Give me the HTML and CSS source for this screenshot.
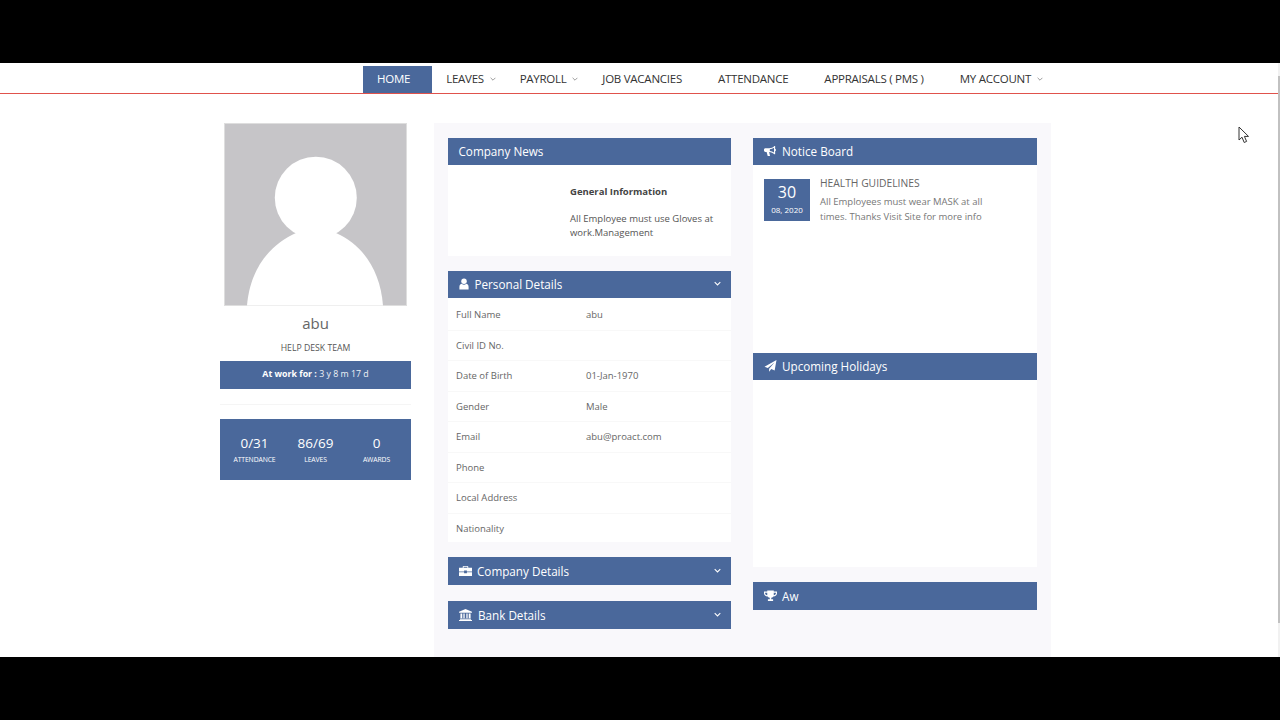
FILE: index.html
```html
<!DOCTYPE html>
<html lang="en">
<head>
    <meta charset="UTF-8">
    <meta name="viewport" content="width=device-width, initial-scale=1.0">
    <title>Employee Dashboard</title>
    <link rel="stylesheet" href="styles.css">
</head>
<body>
    <div class="letterbox"></div>
    <div class="screen">
        <div class="page">
            <nav class="topnav">
                <a class="nav-home">HOME</a>
                <a>LEAVES <svg class="nav-caret" viewBox="0 0 10 6"><path d="M1 1l4 4 4-4"/></svg></a>
                <a>PAYROLL <svg class="nav-caret" viewBox="0 0 10 6"><path d="M1 1l4 4 4-4"/></svg></a>
                <a>JOB VACANCIES</a>
                <a>ATTENDANCE</a>
                <a>APPRAISALS ( PMS )</a>
                <a>MY ACCOUNT <svg class="nav-caret" viewBox="0 0 10 6"><path d="M1 1l4 4 4-4"/></svg></a>
            </nav>

            <main class="content">
                <!-- profile column -->
                <aside class="profile">
                    <svg class="avatar" viewBox="0 0 183 183">
                        <rect x="0.500" y="0.500" width="182" height="182" fill="#c6c5c8" stroke="#dedede"/>
                        <circle cx="91.800" cy="74.700" r="41" fill="#fff"/>
                        <path d="M23 182.500C26 145 47 121 72 110H112C137 121 156 145 159 182.500Z" fill="#fff"/>
                    </svg>
                    <h2 class="profile-name">abu</h2>
                    <p class="profile-team">HELP DESK TEAM</p>
                    <div class="work-bar"><b>At work for :</b> 3 y 8 m 17 d</div>
                    <hr class="profile-line">
                    <div class="stats">
                        <div class="stat"><strong>0/31</strong><span>ATTENDANCE</span></div>
                        <div class="stat"><strong>86/69</strong><span>LEAVES</span></div>
                        <div class="stat"><strong>0</strong><span>AWARDS</span></div>
                    </div>
                </aside>

                <div class="board">
                    <div class="col">
                        <section class="panel">
                            <div class="panel-head"><span>Company News</span></div>
                            <div class="news-body">
                                <h4>General Information</h4>
                                <p>All Employee must use Gloves at work.Management</p>
                            </div>
                        </section>

                        <section class="panel">
                            <div class="panel-head">
                                <svg class="icon" viewBox="0 0 12 14"><circle cx="6" cy="3.800" r="3.300"/><path d="M0.500 13.500V10.500C0.500 8.300 1.800 7 3.300 6.800 4 7.500 5 7.900 6 7.900S8 7.500 8.700 6.800C10.200 7 11.500 8.300 11.500 10.500V13.500Z"/></svg>
                                <span>Personal Details</span>
                                <svg class="chev" viewBox="0 0 10 6"><path d="M1 1l4 4 4-4"/></svg>
                            </div>
                            <div class="details">
                                <div class="row"><span>Full Name</span><span>abu</span></div>
                                <div class="row"><span>Civil ID No.</span><span></span></div>
                                <div class="row"><span>Date of Birth</span><span>01-Jan-1970</span></div>
                                <div class="row"><span>Gender</span><span>Male</span></div>
                                <div class="row"><span>Email</span><span>abu@proact.com</span></div>
                                <div class="row"><span>Phone</span><span></span></div>
                                <div class="row"><span>Local Address</span><span></span></div>
                                <div class="row"><span>Nationality</span><span></span></div>
                            </div>
                        </section>

                        <section class="panel">
                            <div class="panel-head head-tall">
                                <svg class="icon icon-wide" viewBox="0 0 14 12"><path d="M5 0.500H9C9.600 0.500 10 0.900 10 1.500V2.500H14V6.500H8.500V5.500H5.500V6.500H0V2.500H4V1.500C4 0.900 4.400 0.500 5 0.500ZM5 2.500H9V1.500H5ZM0 7.300H5.500V8.500H8.500V7.300H14V11.500H0Z"/></svg>
                                <span>Company Details</span>
                                <svg class="chev" viewBox="0 0 10 6"><path d="M1 1l4 4 4-4"/></svg>
                            </div>
                        </section>

                        <section class="panel panel-bank">
                            <div class="panel-head head-tall">
                                <svg class="icon icon-wide" viewBox="0 0 14 13"><path d="M7 0L14 3V4H0V3ZM1.500 4.800H3.500V10H1.500ZM4.700 4.800H6.100V10H4.700ZM7.900 4.800H9.300V10H7.900ZM10.500 4.800H12.500V10H10.500ZM1 10.600H13V11.600H1ZM0 12H14V13H0Z"/></svg>
                                <span class="bank-title">Bank Details</span>
                                <svg class="chev" viewBox="0 0 10 6"><path d="M1 1l4 4 4-4"/></svg>
                            </div>
                        </section>
                    </div>

                    <div class="col col-right">
                        <section class="panel">
                            <div class="panel-head">
                                <svg class="icon icon-wide" viewBox="0 0 14 12"><path d="M12 0.500V3.600C13.200 3.900 13.200 6 12 6.300V9.500H11.200C9.800 8 7.800 7.200 5.500 7L6.500 11.500H4L2.800 7H1.500C0.700 7 0 6.300 0 5.500V4.500C0 3.700 0.700 3 1.500 3H5.500C7.800 2.900 9.800 2 11.200 0.500ZM10.800 2.400C9.500 3.300 7.900 3.900 6.300 4V6C7.900 6.200 9.500 6.700 10.800 7.600Z"/></svg>
                                <span>Notice Board</span>
                            </div>
                            <div class="notice-body">
                                <div class="date-box"><b>30</b><span>08, 2020</span></div>
                                <div class="notice-text">
                                    <h5>HEALTH GUIDELINES</h5>
                                    <p>All Employees must wear MASK at all times. Thanks Visit Site for more info</p>
                                </div>
                            </div>
                        </section>

                        <section class="panel">
                            <div class="panel-head">
                                <svg class="icon icon-wide" viewBox="0 0 13 13"><path d="M13 0L11 11.500 7.300 9.800 5 12.800V9.500L10.800 2.600 3.600 8.700 0 7.200Z"/></svg>
                                <span>Upcoming Holidays</span>
                            </div>
                            <div class="holiday-body"></div>
                        </section>

                        <section class="panel panel-award">
                            <div class="panel-head head-tall">
                                <svg class="icon icon-wide" viewBox="0 0 14 12"><path d="M3.500 0H10.500V1.200H14V3C14 5 12.400 6.300 10 6.500 9.400 7.300 8.600 7.800 7.800 8V9.600H9.800V11.500H4.200V9.600H6.200V8C5.400 7.800 4.600 7.300 4 6.500 1.600 6.300 0 5 0 3V1.200H3.500ZM1.200 2.400V3C1.200 4.100 2 5 3.500 5.200 3.500 4.400 3.500 3.400 3.500 2.400ZM12.800 2.400H10.500C10.500 3.400 10.500 4.400 10.500 5.200 12 5 12.800 4.100 12.800 3Z"/></svg>
                                <span>Aw</span>
                            </div>
                        </section>
                    </div>
                </div>
            </main>
        </div>
        <div class="scrollbar"><div class="scroll-thumb"></div></div>

        <!-- mouse pointer caught in the recording -->
        <svg class="pointer" viewBox="0 0 12 18"><path d="M1 1V14L4 11.200 6.200 16.500 8.600 15.400 6.400 10.400H10.500Z"/></svg>
    </div>
    <div class="letterbox"></div>
</body>
</html>
```

FILE: styles.css
```css
* {
    margin: 0;
    padding: 0;
    box-sizing: border-box;
}

body {
    height: 720px;
    overflow: hidden;
    display: flex;
    flex-direction: column;
    background-color: #000;
    font-family: "Open Sans", "Liberation Sans", sans-serif;
    color: #555;
}

.letterbox {
    height: 63px;
    background-color: #000;
    flex: none;
}

.screen {
    position: relative;
    height: 594px;
    display: flex;
    background-color: #fff;
    overflow: hidden;
}

.page {
    flex: 1;
    min-width: 0;
}

/* top navigation */
.topnav {
    height: 31px;
    padding: 3px 0 0 363px;
    display: flex;
    align-items: stretch;
    border-bottom: 1px solid #e0524c;
}

.topnav a {
    padding: 0 18px 2px;
    display: flex;
    align-items: center;
    white-space: pre;
    font-size: 11.500px;
    letter-spacing: -0.25px;
    color: #333;
}

.topnav .nav-home {
    padding: 0 22px 2px 14px;
    margin-right: -4px;
    background-color: #4a689b;
    color: #fff;
}

.nav-caret {
    width: 6px;
    height: 4px;
    margin-left: 3px;
    margin-right: -12px;
    fill: none;
    stroke: #777;
    stroke-width: 1.2;
}

.content {
    padding: 29px 0 0 220px;
    display: flex;
    gap: 23px;
}

/* profile column */
.profile {
    width: 191px;
    flex: none;
    text-align: center;
}

.avatar {
    display: block;
    width: 183px;
    height: 183px;
    margin: 0 auto;
}

.profile-name {
    margin-top: 6px;
    font-size: 15px;
    line-height: 22px;
    font-weight: 400;
    color: #666;
}

.profile-team {
    margin-top: 7px;
    font-size: 8.700px;
    line-height: 14px;
    color: #555;
}

.work-bar {
    margin-top: 6px;
    height: 28px;
    line-height: 27px;
    background-color: #4a689b;
    color: #eef1f6;
    font-size: 8.800px;
}

.work-bar b {
    color: #fff;
}

.profile-line {
    margin: 15px 0 14px;
    border: none;
    border-top: 1px solid #f5f5f5;
}

.stats {
    height: 61px;
    padding: 16px 4px 0;
    display: grid;
    grid-template-columns: repeat(3, 1fr);
    background-color: #4a689b;
    color: #fff;
}

.stat strong {
    display: block;
    font-size: 13.500px;
    line-height: 17px;
    font-weight: 400;
}

.stat span {
    display: block;
    margin-top: 3px;
    font-size: 6.800px;
    line-height: 10px;
    letter-spacing: -0.1px;
}

/* company, notice columns */
.board {
    width: 617px;
    height: 534px;
    padding: 15px 14px 0;
    display: flex;
    gap: 22px;
    background-color: #f9f8fb;
}

.col {
    width: 283px;
    display: flex;
    flex-direction: column;
    gap: 15px;
}

.col-right {
    width: 284px;
    gap: 0;
}

.panel-head {
    height: 27px;
    padding: 0 11px 2px 10.500px;
    display: flex;
    align-items: center;
    gap: 6px;
    background-color: #4a689b;
    color: #fff;
    font-size: 11.700px;
}

.head-tall {
    height: 28px;
    padding-bottom: 1px;
}

.panel-bank {
    margin-top: 1px;
}

.bank-title {
    margin-left: 1px;
}

.panel-award {
    margin-top: 15px;
}

.icon {
    width: 10px;
    height: 12px;
    fill: #fff;
    flex: none;
}

.icon-wide {
    width: 13px;
    margin-right: -0.500px;
}

.chev {
    width: 7px;
    height: 5px;
    margin-left: auto;
    margin-right: -1px;
    fill: none;
    stroke: #fff;
    stroke-width: 1.5;
}

.news-body {
    height: 91px;
    padding: 20px 12px 0 122px;
    background-color: #fff;
}

.news-body h4 {
    font-size: 9.500px;
    line-height: 14px;
    font-weight: 700;
    color: #444;
}

.news-body p {
    margin-top: 13px;
    font-size: 9.500px;
    line-height: 14px;
    color: #555;
}

.details {
    padding-top: 2px;
    background-color: #fff;
}

.row {
    height: 30.500px;
    padding: 0 8px;
    display: grid;
    grid-template-columns: 130px 1fr;
    align-items: center;
    border-bottom: 1px solid #f8f8f8;
    font-size: 9.500px;
    color: #666;
}

.row:last-child {
    height: 28.500px;
    padding-top: 1px;
    border-bottom: none;
}

.notice-body {
    height: 188px;
    padding: 13px 10px 0 11px;
    display: flex;
    gap: 10px;
    background-color: #fff;
}

.date-box {
    width: 46px;
    height: 42px;
    margin-top: 1px;
    flex: none;
    text-align: center;
    background-color: #4a689b;
    color: #fff;
}

.date-box b {
    display: block;
    padding-top: 3px;
    font-size: 16px;
    line-height: 20px;
    font-weight: 400;
}

.date-box span {
    display: block;
    margin-top: 2px;
    font-size: 8px;
    line-height: 12px;
}

.notice-text {
    width: 170px;
}

.notice-text h5 {
    font-size: 10.300px;
    line-height: 10px;
    font-weight: 400;
    color: #666;
}

.notice-text p {
    margin-top: 6px;
    font-size: 9.500px;
    line-height: 15px;
    color: #777;
}

.holiday-body {
    height: 187px;
    background-color: #fff;
}

/* scrollbar from the recording */
.scrollbar {
    width: 2px;
    flex: none;
    background-color: #f1f1f1;
}

.scroll-thumb {
    margin-top: 13px;
    height: 547px;
    background-color: #c1c1c1;
}

.pointer {
    position: absolute;
    left: 1238px;
    top: 63px;
    width: 12px;
    height: 18px;
    fill: #fff;
    stroke: #333;
    stroke-width: 1;
}
```
